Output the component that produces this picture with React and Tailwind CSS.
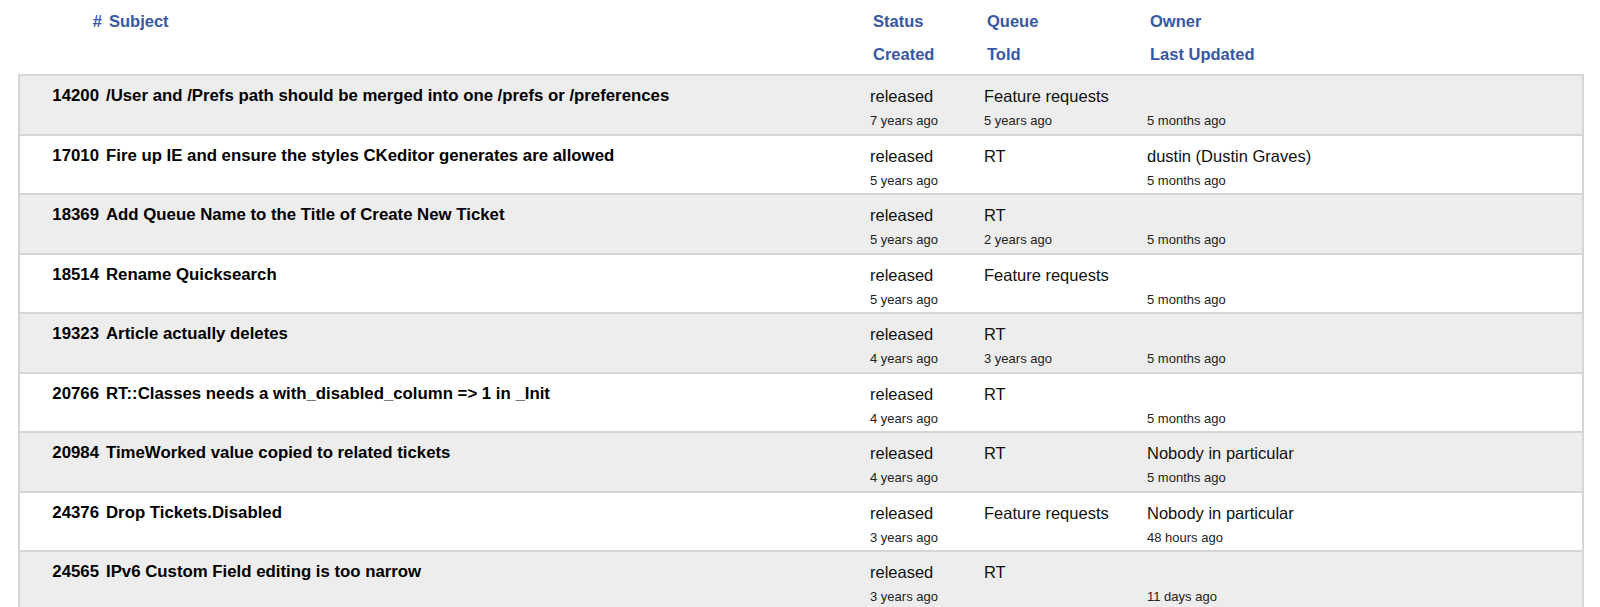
import React from 'react';

const tickets = [
  { id: 14200, subject: '/User and /Prefs path should be merged into one /prefs or /preferences', status: 'released', queue: 'Feature requests', owner: '', created: '7 years ago', told: '5 years ago', updated: '5 months ago' },
  { id: 17010, subject: 'Fire up IE and ensure the styles CKeditor generates are allowed', status: 'released', queue: 'RT', owner: 'dustin (Dustin Graves)', created: '5 years ago', told: '', updated: '5 months ago' },
  { id: 18369, subject: 'Add Queue Name to the Title of Create New Ticket', status: 'released', queue: 'RT', owner: '', created: '5 years ago', told: '2 years ago', updated: '5 months ago' },
  { id: 18514, subject: 'Rename Quicksearch', status: 'released', queue: 'Feature requests', owner: '', created: '5 years ago', told: '', updated: '5 months ago' },
  { id: 19323, subject: 'Article actually deletes', status: 'released', queue: 'RT', owner: '', created: '4 years ago', told: '3 years ago', updated: '5 months ago' },
  { id: 20766, subject: 'RT::Classes needs a with_disabled_column => 1 in _Init', status: 'released', queue: 'RT', owner: '', created: '4 years ago', told: '', updated: '5 months ago' },
  { id: 20984, subject: 'TimeWorked value copied to related tickets', status: 'released', queue: 'RT', owner: 'Nobody in particular', created: '4 years ago', told: '', updated: '5 months ago' },
  { id: 24376, subject: 'Drop Tickets.Disabled', status: 'released', queue: 'Feature requests', owner: 'Nobody in particular', created: '3 years ago', told: '', updated: '48 hours ago' },
  { id: 24565, subject: 'IPv6 Custom Field editing is too narrow', status: 'released', queue: 'RT', owner: '', created: '3 years ago', told: '', updated: '11 days ago' },
];

const cols = 'grid grid-cols-[79px_771px_114px_163px_1fr]';

const TicketRow = ({ t, odd }) => (
  <div className={`h-[59.5px] border-t-2 border-[#d6d6d6] pt-[10px] ${odd ? 'bg-[#ededed]' : 'bg-white'}`}>
    <div className={`${cols} leading-[20px]`}>
      <div className="text-right text-[16.8px] font-bold text-black">{t.id}</div>
      <div className="pl-[7px] text-[16.8px] font-bold text-black">{t.subject}</div>
      <div className="text-[16.5px] text-[#111]">{t.status}</div>
      <div className="text-[16.5px] text-[#111]">{t.queue}</div>
      <div className="text-[16.5px] text-[#111]">{t.owner}</div>
    </div>
    <div className={`${cols} mt-[7px] text-[13px] leading-[16px] text-[#222]`}>
      <div />
      <div />
      <div>{t.created}</div>
      <div>{t.told}</div>
      <div>{t.updated}</div>
    </div>
  </div>
);

export default function App() {
  return (
    <div className="bg-white min-h-screen pl-[18px] font-['Liberation_Sans',Arial,sans-serif] overflow-hidden">
      <div className="w-[1566px] pl-[5px] pt-[11px] h-[74px] text-[16.5px] font-bold leading-[20px] text-[#3858a4]">
        <div className={cols}>
          <div className="text-right">#</div>
          <div className="pl-[7px]">Subject</div>
          <div>Status</div>
          <div>Queue</div>
          <div>Owner</div>
        </div>
        <div className={`${cols} mt-[13px]`}>
          <div />
          <div />
          <div>Created</div>
          <div>Told</div>
          <div>Last Updated</div>
        </div>
      </div>
      <div className="w-[1566px] border-x-2 border-[#d6d6d6]">
        {tickets.map((t, i) => (
          <TicketRow key={t.id} t={t} odd={i % 2 === 0} />
        ))}
      </div>
    </div>
  );
}
